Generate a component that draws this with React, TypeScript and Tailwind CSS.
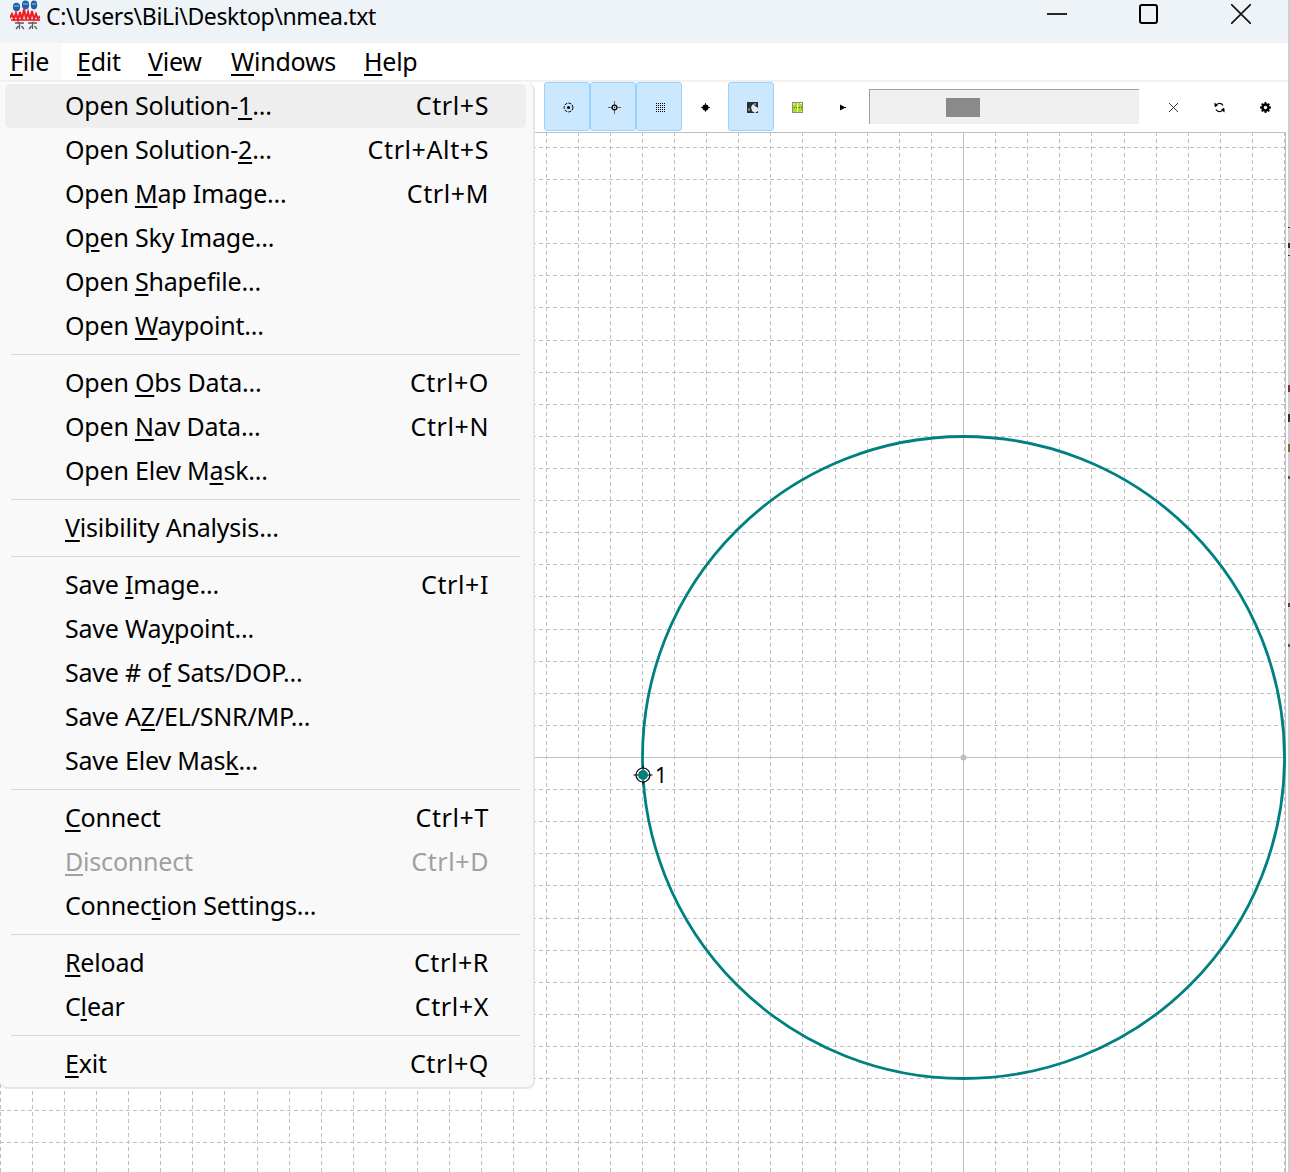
import type { ReactNode } from "react";

const FONT = "font-['Noto_Sans','Open_Sans',sans-serif]";

type Item = { label: ReactNode; keys?: string; off?: boolean; hot?: boolean };

// underlined access key
const K = ({ children }: { children: string }) => (
  <u className="underline decoration-[1.5px] underline-offset-[3px]">{children}</u>
);

const groups: Item[][] = [
  [
    { label: <>Open Solution-<K>1</K>...</>, keys: "Ctrl+S", hot: true },
    { label: <>Open Solution-<K>2</K>...</>, keys: "Ctrl+Alt+S" },
    { label: <>Open <K>M</K>ap Image...</>, keys: "Ctrl+M" },
    { label: <>O<K>p</K>en Sky Image...</> },
    { label: <>Open <K>S</K>hapefile...</> },
    { label: <>Open <K>W</K>aypoint...</> },
  ],
  [
    { label: <>Open <K>O</K>bs Data...</>, keys: "Ctrl+O" },
    { label: <>Open <K>N</K>av Data...</>, keys: "Ctrl+N" },
    { label: <>Open Elev M<K>a</K>sk...</> },
  ],
  [{ label: <><K>V</K>isibility Analysis...</> }],
  [
    { label: <>Save <K>I</K>mage...</>, keys: "Ctrl+I" },
    { label: <>Save Wa<K>y</K>point...</> },
    { label: <>Save # o<K>f</K> Sats/DOP...</> },
    { label: <>Save A<K>Z</K>/EL/SNR/MP...</> },
    { label: <>Save Elev Mas<K>k</K>...</> },
  ],
  [
    { label: <><K>C</K>onnect</>, keys: "Ctrl+T" },
    { label: <><K>D</K>isconnect</>, keys: "Ctrl+D", off: true },
    { label: <>Connec<K>t</K>ion Settings...</> },
  ],
  [
    { label: <><K>R</K>eload</>, keys: "Ctrl+R" },
    { label: <>C<K>l</K>ear</>, keys: "Ctrl+X" },
  ],
  [{ label: <><K>E</K>xit</>, keys: "Ctrl+Q" }],
];

const topMenus = [
  { hot: "F", rest: "ile", cls: "w-[62px] pl-[10px] bg-[#f9f9f9]" },
  { hot: "E", rest: "dit", cls: "w-[71px] pl-[15px]" },
  { hot: "V", rest: "iew", cls: "w-[83px] pl-[15px]" },
  { hot: "W", rest: "indows", cls: "w-[133px] pl-[15px]" },
  { hot: "H", rest: "elp", cls: "w-[80px] pl-[15px]" },
];

function AppIcon() {
  return (
    <svg width="30" height="30" viewBox="0 0 30 30" className="shrink-0">
      <ellipse cx="6.5" cy="7" rx="3.6" ry="4.2" fill="#1f5fa8" />
      <ellipse cx="15.5" cy="5" rx="3.6" ry="4.4" fill="#1f5fa8" />
      <ellipse cx="24" cy="5" rx="3.2" ry="4.4" fill="#1f5fa8" />
      <path d="M4 6h5M13 4h5M22 4h4" stroke="#9cc2ee" strokeWidth="1" />
      <path
        d="M0 18 L2 14 L4 19 L6 13 L8 20 L10 12 L12 20 L14 9 L16 19 L18 12 L20 20 L22 11 L24 19 L26 14 L28 19 L30 16"
        fill="none"
        stroke="#ee1c24"
        strokeWidth="2"
      />
      <path d="M1 20 H30" stroke="#ee1c24" strokeWidth="1.6" />
      <path
        d="M5 23 h9 M9.5 22 v7 M6 29 l2.5 -3 M14 29 l-2.5 -3 M18 23 h9 M22.5 22 v7 M19 29 l2.5 -3 M27 29 l-2.5 -3"
        stroke="#5a5a5a"
        strokeWidth="1.3"
        fill="none"
      />
    </svg>
  );
}

function Menu() {
  return (
    <div className="absolute left-0 top-[83px] w-[535px] rounded-b-[8px] rounded-tr-[8px] border-r-2 border-b-2 border-[#e6e6e6] bg-[#f9f9f9] pt-px pb-px pl-[5px] pr-[7px] text-[25px] leading-[44px] tracking-[-0.2px] text-black">
      {groups.map((group, i) => (
        <div key={i}>
          {i > 0 && (
            <div className="flex h-[13px] items-center pl-[6px] pr-[6px]">
              <div className="h-px w-full bg-[#d7d7d7]" />
            </div>
          )}
          {group.map((item, j) => (
            <div
              key={j}
              className={`flex h-[44px] items-center justify-between rounded-[5px] pl-[60px] pr-[37px] ${
                item.hot ? "bg-[#eeeeee]" : ""
              } ${item.off ? "text-[#a0a0a0]" : ""}`}
            >
              <span className="-translate-y-px">{item.label}</span>
              {item.keys && <span className="-translate-y-px tracking-[0.6px]">{item.keys}</span>}
            </div>
          ))}
        </div>
      ))}
    </div>
  );
}

// the margins keep the small bitmaps on whole pixels
function ToolButton({ on, children }: { on?: boolean; children: ReactNode }) {
  return (
    <div
      className={`flex h-[49px] w-[46px] items-center justify-center rounded-[3px] [&>svg]:mt-[2px] ${
        on ? "border border-[#99d1ff] bg-[#cce8ff] [&>svg]:ml-[3px]" : "[&>svg]:ml-px"
      }`}
    >
      {children}
    </div>
  );
}

function Toolbar() {
  return (
    <div className="flex h-[50px] items-start pl-[544px]">
      <ToolButton on>
        <svg width="11" height="11" viewBox="0 0 11 11">
          <circle cx="5.5" cy="5.5" r="4.4" fill="none" stroke="#000" strokeWidth="1" strokeDasharray="3 1" />
          <circle cx="5.5" cy="5.5" r="1.6" fill="#000" />
        </svg>
      </ToolButton>
      <ToolButton on>
        <svg width="13" height="13" viewBox="0 0 13 13">
          <path d="M6.5 0 V13 M0 6.5 H13" stroke="#666" strokeWidth="1" />
          <circle cx="6.5" cy="6.5" r="2.4" fill="#cce8ff" stroke="#000" strokeWidth="1.2" />
          <circle cx="6.5" cy="6.5" r="0.7" fill="#000" />
        </svg>
      </ToolButton>
      <ToolButton on>
        <svg width="9" height="9" viewBox="0 0 9 9" shapeRendering="crispEdges">
          <path
            d="M0 .5h9M0 2.5h9M0 4.5h9M0 6.5h9M0 8.5h9"
            stroke="#000"
            strokeWidth="1"
            strokeDasharray="1 1"
          />
        </svg>
      </ToolButton>
      <ToolButton>
        <svg width="9" height="9" viewBox="0 0 9 9">
          <path d="M4.5 0V9M0 4.5H9" stroke="#333" strokeWidth="1" />
          <circle cx="4.5" cy="4.5" r="3.1" fill="#000" />
        </svg>
      </ToolButton>
      <ToolButton on>
        <svg width="11" height="11" viewBox="0 0 11 11">
          <rect width="11" height="11" fill="#26312e" />
          <path d="M4 5 L6 2 L8 4 L11 6 L11 9 L8 11 L5 9 Z" fill="#e4ebf2" />
          <rect x="1" y="6" width="2" height="3" fill="#6b7f80" />
          <rect x="7" y="1" width="2" height="2" fill="#7d8d90" />
        </svg>
      </ToolButton>
      <ToolButton>
        <svg width="11" height="11" viewBox="0 0 11 11" shapeRendering="crispEdges">
          <rect width="11" height="11" fill="#8a8a8a" />
          <rect x="1" y="1" width="9" height="9" fill="#a8e020" />
          <path d="M5 1h1v9H5z" fill="#f0f8d8" />
          <path d="M1 1h1v2H1zM8 1h2v1H8zM9 9h1v1H9z" fill="#f0f8d8" />
          <path d="M2 5h1v1H2zM4 5h1v1H4zM7 5h1v1H7zM9 5h1v1H9z" fill="#3d6b10" />
        </svg>
      </ToolButton>
      <ToolButton>
        <svg width="9" height="9" viewBox="0 0 9 9">
          <path d="M1 1.5 L6.5 4.5 L1 7.5 Z M5 4 h2 v1 h-2z" fill="#000" />
        </svg>
      </ToolButton>
      <div className="mt-[7px] ml-[3px] flex h-[35px] w-[270px] items-center border-t border-l border-[#a0a0a0] bg-[#f0f0f0] pl-[76px]">
        <div className="h-[19px] w-[34px] bg-[#8a8a8a]" />
      </div>
      <div className="ml-[11px] flex">
        <ToolButton>
          <svg width="11" height="11" viewBox="0 0 11 11">
            <path d="M1 1 L10 10 M10 1 L1 10" stroke="#222" strokeWidth="0.9" />
          </svg>
        </ToolButton>
        <ToolButton>
          <svg width="11" height="11" viewBox="0 0 11 11">
            <path d="M1.5 5 A4 4 0 0 1 9 3.5 M9.5 6 A4 4 0 0 1 2 7.5" fill="none" stroke="#000" strokeWidth="1.2" />
            <path d="M0.5 0.5 L4 3.5 L0.5 4.5 Z M10.5 10.5 L7 7.5 L10.5 6.5 Z" fill="#000" />
          </svg>
        </ToolButton>
        <ToolButton>
          <svg width="11" height="11" viewBox="0 0 11 11">
            <circle cx="5.5" cy="5.5" r="3" fill="none" stroke="#000" strokeWidth="2.6" />
            <path d="M5.5 0V11M0 5.5H11M1.7 1.7L9.3 9.3M9.3 1.7L1.7 9.3" stroke="#000" strokeWidth="1.8" strokeDasharray="2 7 2" />
          </svg>
        </ToolButton>
      </div>
    </div>
  );
}

// grid, axes and the single track point
function Plot() {
  const step = 32.11;
  const cx = 963.5;
  const cy = 625.5; // 757.5 in page coordinates, the svg starts at y=132
  const xs = Array.from({ length: 60 }, (_, i) => cx + (i - 30) * step).filter((x) => x > 0 && x < 1285);
  const ys = Array.from({ length: 40 }, (_, i) => cy + (i - 20) * step).filter((y) => y > 1 && y < 1040);
  return (
    <svg width="1288" height="1040" className="block">
      <g stroke="#c0c0c0" strokeWidth="1" strokeDasharray="4 3">
        {xs.map((x) => (
          <line key={x} x1={Math.floor(x) + 0.5} x2={Math.floor(x) + 0.5} y1="0" y2="1040" />
        ))}
        {ys.map((y) => (
          <line key={y} x1="0" x2="1285" y1={Math.floor(y) + 0.5} y2={Math.floor(y) + 0.5} />
        ))}
      </g>
      <g stroke="#c0c0c0" strokeWidth="1">
        <line x1="0" x2="1285" y1={cy} y2={cy} />
        <line x1={cx} x2={cx} y1="0" y2="1040" />
        <line x1="0" x2="1285.5" y1="0.5" y2="0.5" />
        <line x1="1285.5" x2="1285.5" y1="0" y2="1040" />
      </g>
      <circle cx={cx} cy={cy} r="3" fill="#c0c0c0" />
      <circle cx={cx} cy={cy} r="321" fill="none" stroke="#008080" strokeWidth="2.8" />
      <g fill="none" stroke="#000">
        <circle cx="643" cy="643" r="7" strokeWidth="1.2" fill="#fff" />
        <path d="M633.5 643H652.5M643 633.5V652.5" strokeWidth="1" />
      </g>
      <circle cx="643" cy="643" r="5" fill="#008080" />
      <text x="655" y="650.5" fontSize="21" fontFamily="Noto Sans, sans-serif" fill="#000">
        1
      </text>
    </svg>
  );
}

// sliver of the window behind this one, only its text edges show
function BackWindowEdge() {
  return (
    <div className="flex h-full w-[2px] flex-col bg-[#d0d0d0]">
      <div className="mt-[227px] h-px bg-[#333]" />
      <div className="mt-[15px] h-[5px] bg-[#333]" />
      <div className="mt-[7px] h-px bg-[#333]" />
      <div className="mt-[129px] h-[7px] bg-[#6b3a3a]" />
      <div className="mt-[22px] h-[8px] bg-[#333]" />
      <div className="mt-[22px] h-[8px] bg-[#8a6a3a]" />
      <div className="mt-[24px] h-[3px] bg-[#555]" />
      <div className="mt-[124px] h-[4px] bg-[#6b3a3a]" />
      <div className="mt-[37px] h-[3px] bg-[#555]" />
    </div>
  );
}

export default function App() {
  return (
    <div className={`relative flex h-[1172px] w-[1290px] overflow-hidden bg-white ${FONT}`}>
      <div className="w-[1288px] shrink-0">
        <div className="flex h-[43px] items-start bg-[#eef3f8] pl-[10px] text-[23px] leading-[32px] tracking-[-0.37px] text-black">
          <AppIcon />
          <span className="ml-[6px] flex-1">C:\Users\BiLi\Desktop\nmea.txt</span>
          <div className="flex items-start pt-[4px] pr-[37px]">
            <svg width="20" height="20" viewBox="0 0 20 20" className="mr-[72px]">
              <path d="M0 10H20" stroke="#000" strokeWidth="1.7" />
            </svg>
            <svg width="19" height="20" viewBox="0 0 19 20" className="mr-[73px]">
              <rect x="1" y="1" width="17" height="18" rx="2" fill="none" stroke="#000" strokeWidth="2" />
            </svg>
            <svg width="20" height="20" viewBox="0 0 20 20">
              <path d="M0 0L20 20M20 0L0 20" stroke="#111" strokeWidth="1.6" />
            </svg>
          </div>
        </div>
        <div className="flex h-[39px] items-center border-b-2 border-[#f0f0f0] bg-white text-[25px] leading-[37px] tracking-[-0.25px] text-black">
          {topMenus.map((m) => (
            <div key={m.hot} className={m.cls}>
              <K>{m.hot}</K>
              {m.rest}
            </div>
          ))}
        </div>
        <Toolbar />
        <Plot />
      </div>
      <BackWindowEdge />
      <Menu />
    </div>
  );
}
